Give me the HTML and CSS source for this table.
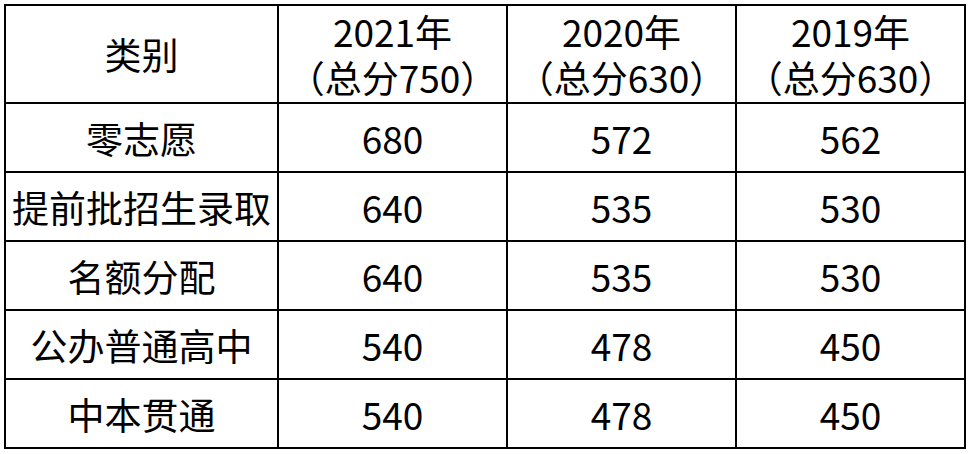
FILE: index.html
```html
<!DOCTYPE html>
<html lang="zh-CN">
<head>
<meta charset="utf-8">
<title>分数线</title>
<link rel="stylesheet" href="styles.css">
</head>
<body>
<div class="sheet">
<table class="scores">
<colgroup><col class="c-cat"><col class="c-yr"><col class="c-yr"><col class="c-yr"></colgroup>
<thead>
<tr class="head">
<th>类别</th>
<th>2021年<br>（总分750）</th>
<th>2020年<br>（总分630）</th>
<th>2019年<br>（总分630）</th>
</tr>
</thead>
<tbody>
<tr><td>零志愿</td><td>680</td><td>572</td><td>562</td></tr>
<tr><td>提前批招生录取</td><td>640</td><td>535</td><td>530</td></tr>
<tr><td>名额分配</td><td>640</td><td>535</td><td>530</td></tr>
<tr><td>公办普通高中</td><td>540</td><td>478</td><td>450</td></tr>
<tr><td>中本贯通</td><td>540</td><td>478</td><td>450</td></tr>
</tbody>
</table>
</div>
</body>
</html>
```
FILE: styles.css
```css
html, body {
  margin: 0;
  padding: 0;
  background: #ffffff;
}
.sheet {
  padding: 4px 0 0 4px;
}
.scores {
  border-collapse: separate;
  border-spacing: 0;
  table-layout: fixed;
  width: 962px;
  border-left: 2px solid #000;
  border-top: 2px solid #000;
  font-family: "Noto Sans CJK SC", "Noto Sans", sans-serif;
  font-size: 37px;
  color: #000;
}
.c-cat { width: 273px; }
.c-yr { width: 229px; }
.scores th,
.scores td {
  box-sizing: border-box;
  border-right: 2px solid #000;
  border-bottom: 2px solid #000;
  padding: 0;
  text-align: center;
  vertical-align: middle;
  font-weight: normal;
  white-space: nowrap;
  height: 69px;
  line-height: 46px;
}
.scores .head th {
  height: 98px;
}
```
